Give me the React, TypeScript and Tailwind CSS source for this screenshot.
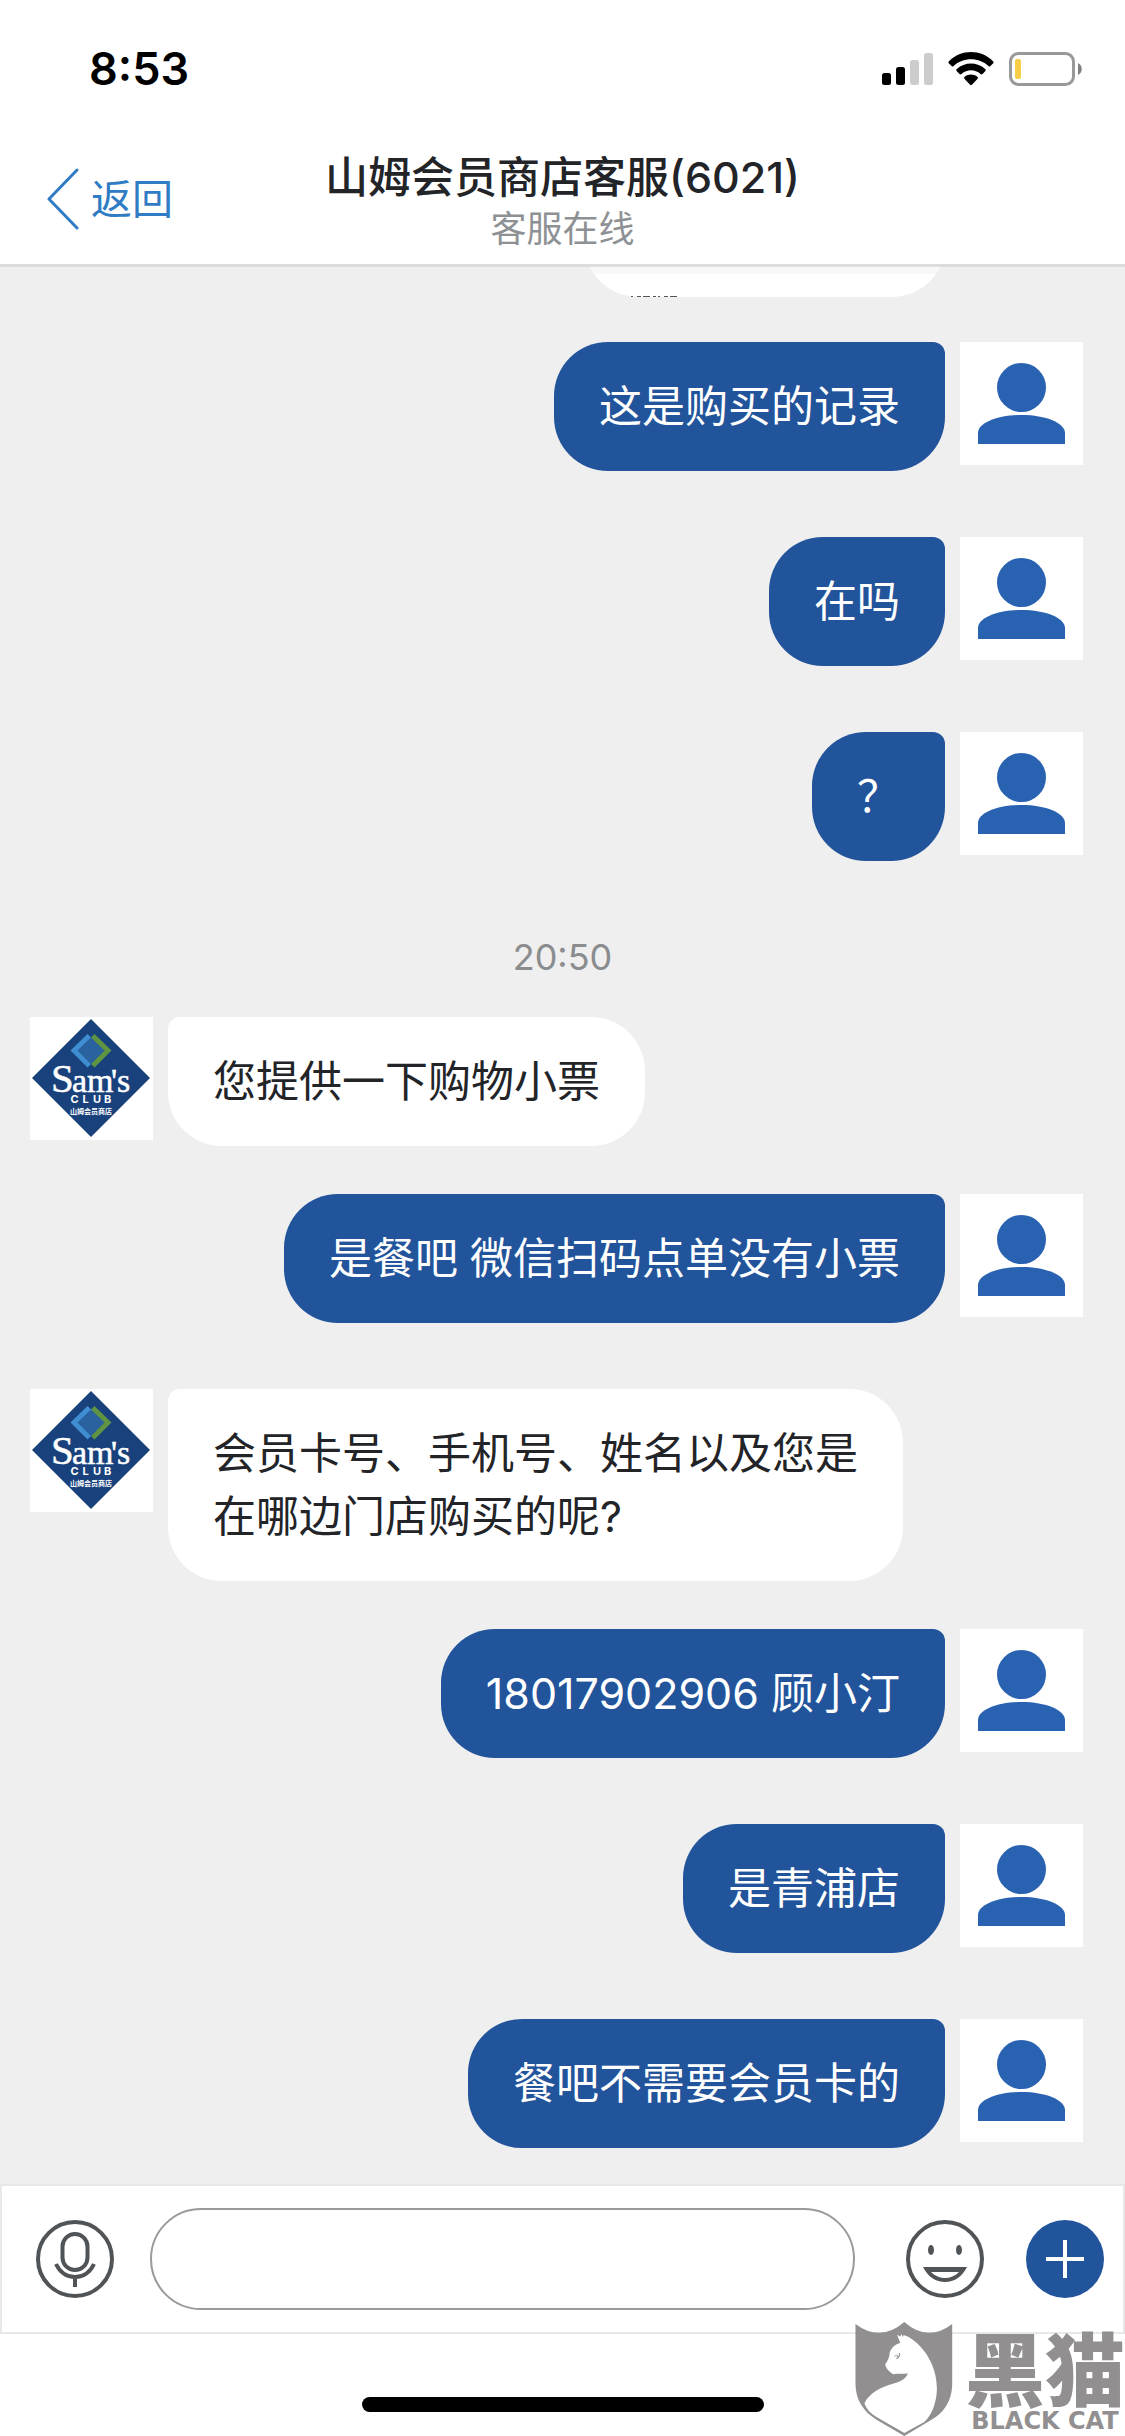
import React, { useState } from 'react';

type Message = {
  id: number;
  from: 'me' | 'service' | 'time';
  text: string;
};

const messages: Message[] = [
  { id: 1, from: 'me', text: '这是购买的记录' },
  { id: 2, from: 'me', text: '在吗' },
  { id: 3, from: 'me', text: '？' },
  { id: 4, from: 'time', text: '20:50' },
  { id: 5, from: 'service', text: '您提供一下购物小票' },
  { id: 6, from: 'me', text: '是餐吧 微信扫码点单没有小票' },
  { id: 7, from: 'service', text: '会员卡号、手机号、姓名以及您是在哪边门店购买的呢?' },
  { id: 8, from: 'me', text: '18017902906 顾小汀' },
  { id: 9, from: 'me', text: '是青浦店' },
  { id: 10, from: 'me', text: '餐吧不需要会员卡的' },
];

const StatusBar: React.FC = () => (
  <div className="h-[132px] pl-[89px] pr-[43px] pb-[6px] pt-[12px] flex items-center justify-between text-black">
    <span className="text-[45px] leading-[60px] font-semibold">8:53</span>
    <div className="flex items-center gap-[15px]">
      <svg className="w-[51px] h-[34px]" viewBox="0 0 51 34">
        <rect x="0" y="21" width="9" height="12" rx="2.5" />
        <rect x="14" y="15" width="9" height="18" rx="2.5" />
        <rect x="28" y="8" width="9" height="25" rx="2.5" fill="#cccccc" />
        <rect x="42" y="1" width="9" height="32" rx="2.5" fill="#cccccc" />
      </svg>
      <svg className="w-[46px] h-[34px]" viewBox="0 0 46 34">
        <path d="M1 11.5a1.5 1.5 0 0 1 0-2.2C13-3 33-3 45 9.3a1.5 1.5 0 0 1 0 2.2l-2.6 2.6a1.3 1.3 0 0 1-1.9 0C31 5 15 5 5.5 14.1a1.3 1.3 0 0 1-1.9 0z" />
        <path d="M8.8 19.3a1.5 1.5 0 0 1 0-2.2c8-7.4 20.4-7.4 28.4 0a1.5 1.5 0 0 1 0 2.2l-2.7 2.7a1.5 1.5 0 0 1-2 0c-5.4-4.9-13.6-4.9-19 0a1.5 1.5 0 0 1-2 0z" />
        <path d="M16.6 27a1.5 1.5 0 0 1 0-2.2c3.7-3 9.1-3 12.8 0a1.5 1.5 0 0 1 0 2.2l-5.5 5.7a1.3 1.3 0 0 1-1.8 0z" />
      </svg>
      <svg className="w-[73px] h-[34px]" viewBox="0 0 73 34">
        <rect x="1.5" y="1.5" width="63" height="31" rx="8" fill="none" stroke="#999999" strokeWidth="3" />
        <rect x="6" y="7" width="6" height="20" rx="2" fill="#f7ce46" />
        <path d="M69 11c5 2.5 5 9.5 0 12z" fill="#808080" />
      </svg>
    </div>
  </div>
);

const Header: React.FC = () => (
  <header className="relative h-[135px] border-b-[3px] border-[#dddddd] flex flex-col items-center pt-[18px]">
    <button type="button" className="absolute left-[47px] top-[36px] flex items-center gap-[12px] text-[#2f7bc4]">
      <svg className="w-[32px] h-[62px]" viewBox="0 0 32 62" fill="none" stroke="currentColor" strokeWidth="3" strokeLinecap="round" strokeLinejoin="round">
        <path d="M30 2L2 31L30 60" />
      </svg>
      <span className="text-[41px] leading-[60px]">返回</span>
    </button>
    <h1 className="text-[43px] leading-[54px] font-medium text-[#222428]">山姆会员商店客服(6021)</h1>
    <p className="text-[36px] leading-[50px] text-[#8e9194]">客服在线</p>
  </header>
);

const UserAvatar: React.FC = () => (
  <svg className="w-[123px] h-[123px] shrink-0 bg-white" viewBox="0 0 123 123" fill="#2a62b2">
    <circle cx="61.5" cy="45.5" r="24.5" />
    <path d="M18 102V91C18 81 37 73 61.5 73S105 81 105 91V102Z" />
  </svg>
);

const ServiceAvatar: React.FC = () => (
  <svg className="w-[123px] h-[123px] shrink-0 bg-white" viewBox="0 0 123 123">
    <path d="M61 2L120 61L61 120L2 61Z" fill="#19427d" />
    <path d="M61 20L75 33.5L61 47L47 33.5Z" fill="#2a619f" />
    <path d="M57.5 17L61 20.5L47.5 33.5L61 47L57.5 50.5L40.5 33.5Z" fill="#3f8ed2" />
    <path d="M64.5 17L61 20.5L74.5 33.5L61 47L64.5 50.5L81.5 33.5Z" fill="#5f9442" />
    <g fill="#ffffff">
      <text x="21" y="75" fontFamily="Liberation Serif, serif" fontSize="34" stroke="#ffffff" strokeWidth="0.5">
        <tspan fontSize="41">S</tspan>
        <tspan x="42">am</tspan>
        <tspan x="81">'</tspan>
        <tspan x="87">s</tspan>
      </text>
      <text x="40.5 52.5 63 74" y="86" fontFamily="Inter, sans-serif" fontSize="11" fontWeight="700">CLUB</text>
      <text x="40" y="97" fontFamily="Noto Sans CJK SC, sans-serif" fontSize="7" fontWeight="700">山姆会员商店</text>
    </g>
  </svg>
);

const MessageRow: React.FC<{ message: Message }> = ({ message }) => {
  if (message.from === 'time') {
    return <p className="h-[90px] text-center text-[36px] leading-[60px] text-[#8a8c8e]">{message.text}</p>;
  }
  if (message.from === 'service') {
    return (
      <div className="flex items-start gap-[15px] pl-[30px] pb-[48px]">
        <ServiceAvatar />
        <p className="max-w-[735px] px-[45px] py-[33px] rounded-[54px] rounded-tl-[12px] bg-white text-[#222428]">
          {message.text}
        </p>
      </div>
    );
  }
  return (
    <div className="flex items-start justify-end gap-[15px] pr-[42px] pb-[66px] last:pb-[36px]">
      <p className="max-w-[735px] px-[45px] py-[33px] rounded-[54px] rounded-tr-[12px] bg-[#22549b] text-white">
        {message.text}
      </p>
      <UserAvatar />
    </div>
  );
};

const MessageBar: React.FC = () => {
  const [text, setText] = useState('');

  return (
    <form className="h-[150px] flex items-center pl-[34px] pr-[19px] border-2 border-[#e8e8e8] bg-white" onSubmit={(e) => e.preventDefault()}>
      <button type="button" aria-label="语音" className="shrink-0">
        <svg className="w-[78px] h-[78px]" viewBox="0 0 78 78" fill="none" stroke="#505457" strokeWidth="4">
          <circle cx="39" cy="39" r="37" />
          <rect x="26.5" y="14" width="25" height="36" rx="12.5" />
          <path d="M20 44C24 52.5 31 57 39 57S54 52.5 58 44M39 57V67" />
        </svg>
      </button>
      <input
        type="text"
        aria-label="输入消息"
        value={text}
        onChange={(e) => setText(e.target.value)}
        className="flex-1 min-w-0 h-[102px] ml-[36px] mr-[51px] px-[40px] rounded-full border-2 border-[#9a9a9a] bg-white outline-none"
      />
      <button type="button" aria-label="表情" className="shrink-0 mr-[42px]">
        <svg className="w-[78px] h-[78px]" viewBox="0 0 78 78" fill="#505457">
          <circle cx="39" cy="39" r="37" fill="none" stroke="#505457" strokeWidth="4" />
          <ellipse cx="25" cy="30" rx="3" ry="5" />
          <ellipse cx="53" cy="30" rx="3" ry="5" />
          <path fillRule="evenodd" d="M17 47H61C56 57 48 62 39 62S22 57 17 47ZM25 52C29 56 34 58 39 58S49 56 53 52Z" />
        </svg>
      </button>
      <button type="button" aria-label="更多" className="shrink-0">
        <svg className="w-[78px] h-[78px]" viewBox="0 0 78 78" fill="none">
          <circle cx="39" cy="39" r="39" fill="#22549b" />
          <path d="M20 39H58M39 20V58" stroke="#ffffff" strokeWidth="4" />
        </svg>
      </button>
    </form>
  );
};

const Watermark: React.FC = () => (
  <div className="absolute right-0 bottom-0 flex items-end gap-[12px] text-[#918f90]">
    <svg className="w-[98px] h-[114px]" viewBox="0 0 292 343">
      <path fill="currentColor" d="M0 6Q75 62 147 0Q217 62 291 6V185C291 240 262 276 230 293L147 343L62 293C25 270 0 235 0 185Z" />
      <path
        fill="#ffffff"
        d="M125 38L135 44L138 36L143 45L145 39L160 45C210 75 245 135 245 200C245 240 230 280 207 301L147 334L62 285C45 275 33 262 27 245C40 215 75 196 115 185C135 180 150 172 158 155C142 157 127 155 113 157C102 150 93 142 89 128C98 115 103 105 103 92C108 77 120 66 135 63Z"
      />
      <path fill="none" stroke="currentColor" strokeWidth="3" d="M118 104L124 98M122 109Q128 113 133 102L132 93" />
      <circle cx="127" cy="103" r="3" fill="currentColor" />
    </svg>
    <div className="flex flex-col items-center pb-[3px] whitespace-nowrap">
      <span className="text-[80px] leading-[76px] font-black">黑猫</span>
      <span className="text-[24px] leading-[24px] font-bold font-['DejaVu_Sans',sans-serif]">BLACK CAT</span>
    </div>
  </div>
);

export default function App() {
  return (
    <div className="relative min-h-screen flex flex-col bg-white font-['Inter','Noto_Sans_CJK_SC',sans-serif]">
      <StatusBar />
      <Header />

      <main className="flex-1 bg-[#efefef] text-[43px] leading-[63px]">
        {/* Tail of the picture message scrolled under the header */}
        <div className="flex justify-end pr-[180px] pb-[45px]">
          <svg className="w-[360px] h-[30px]" viewBox="0 0 360 30">
            <path d="M5 0H355C346 18 328 30 306 30H54C32 30 14 18 5 0Z" fill="#ffffff" />
            <path d="M5 0H355L351 7H9Z" fill="#f8f8f8" />
            <path d="M46 29.5H92" stroke="#555555" strokeDasharray="2 4 4 2 7 3 3 2" />
          </svg>
        </div>
        {messages.map((message) => (
          <MessageRow key={message.id} message={message} />
        ))}
      </main>

      <MessageBar />

      <footer className="h-[102px] flex justify-center pt-[63px]">
        <div className="w-[402px] h-[15px] rounded-full bg-black" />
      </footer>
      <Watermark />
    </div>
  );
}
